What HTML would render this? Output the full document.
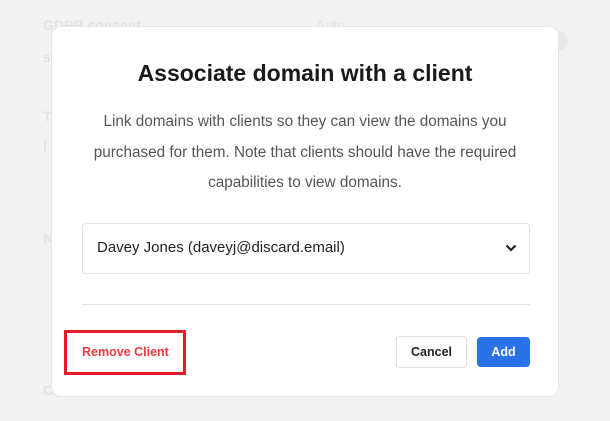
<!DOCTYPE html>
<html><head><meta charset="utf-8"><style>
*{box-sizing:border-box;margin:0;padding:0}
body{width:610px;height:421px;background:#f2f2f2;font-family:"Liberation Sans",sans-serif;position:relative;overflow:hidden}
.bg{position:absolute;color:#e2e2e2;font-size:14px;font-weight:bold}
.modal{position:absolute;left:51px;top:26px;width:508px;height:371px;background:#fff;border-radius:10px;border:1px solid #e6e6e6}
h1{position:absolute;left:0;right:0;top:33px;text-align:center;font-size:23px;font-weight:bold;color:#1a1a1a}
p{position:absolute;left:0;right:0;top:80px;text-align:center;font-size:15.3px;line-height:30.5px;color:#555;white-space:nowrap}
.sel{position:absolute;left:30px;top:196px;width:448px;height:51px;border:1px solid #e2e2e2;border-radius:4px;font-size:15px;color:#222;padding:15px 14px}
.sel svg{position:absolute;right:12px;top:20px}
hr{position:absolute;left:30px;top:277px;width:448px;border:0;border-top:1px solid #e2e2e2}
.rm{position:absolute;left:12px;top:303px;width:122px;height:45px;border:3px solid #e31c2a;color:#ea3a42;font-size:12.5px;font-weight:bold;padding:12px 0 0 15px}
.cancel{position:absolute;left:344px;top:309px;width:71px;height:32px;border:1px solid #ddd;border-radius:4px;text-align:center;font-size:12.5px;font-weight:bold;line-height:30px;color:#222}
.add{position:absolute;left:425px;top:310px;width:53px;height:30px;background:#2a72e8;border-radius:4px;text-align:center;font-size:12.5px;font-weight:bold;line-height:30px;color:#fff}
</style></head><body>
<div class="bg" style="left:43px;top:17px">GDPR consent</div>
<div class="bg" style="left:316px;top:17px;font-weight:normal">Auto</div>
<div class="bg" style="left:43px;top:49px">s</div>
<div class="bg" style="left:43px;top:108px">T</div>
<div class="bg" style="left:43px;top:138px">l</div>
<div class="bg" style="left:43px;top:230px">N</div>
<div class="bg" style="left:43px;top:382px">C</div>
<div style="position:absolute;left:548px;top:31px;width:20px;height:20px;border-radius:50%;background:#e8e8e8"></div>
<div class="modal">
<h1>Associate domain with a client</h1>
<p>Link domains with clients so they can view the domains you<br>purchased for them. Note that clients should have the required<br>capabilities to view domains.</p>
<div class="sel">Davey Jones (daveyj@discard.email)<svg width="12" height="8" viewBox="0 0 12 8"><path d="M1.5 1.5L6 6L10.5 1.5" stroke="#222" stroke-width="2.2" fill="none"/></svg></div>
<hr>
<div class="rm">Remove Client</div>
<div class="cancel">Cancel</div>
<div class="add">Add</div>
</div>
</body></html>
